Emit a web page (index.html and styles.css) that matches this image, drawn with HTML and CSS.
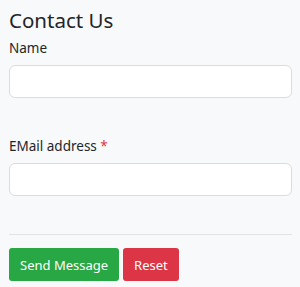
FILE: index.html
```html
<!DOCTYPE html>
<html lang="en">
  <head>
    <meta charset="UTF-8" />
    <title>Contact Us</title>
    <link rel="stylesheet" href="styles.css">
  </head>
  <body>
    <div class="contact">
      <h2>Contact Us</h2>
      <form class="contact-form">
        <div class="field">
          <label for="name">Name</label>
          <input id="name" type="text" />
        </div>
        <div class="field">
          <label for="email">EMail address <span class="req">*</span></label>
          <input id="email" type="email" />
        </div>
        <hr />
        <div class="actions">
          <button type="submit" class="btn send">Send Message</button>
          <button type="reset" class="btn reset">Reset</button>
        </div>
      </form>
    </div>
  </body>
</html>
```

FILE: styles.css
```css
body {
  font-family: "Noto Sans", Arial, sans-serif;
  background: #f8f9fa;
  color: #212529;
  margin: 0;
  padding: 0;
}

.contact {
  padding: 8px 8px 0 9px;
}

h2 {
  font-size: 20.5px;
  font-weight: 400;
  line-height: 25px;
  margin: 0 0 5px;
}

.field {
  display: flex;
  flex-direction: column;
  margin-bottom: 38px;
}

.field label {
  font-size: 13.5px;
  line-height: 20px;
  margin-bottom: 7px;
}

.req {
  color: #dc3545;
}

.field input {
  height: 33px;
  box-sizing: border-box;
  border: 1px solid #dcdcdc;
  border-radius: 6px;
  background: #fff;
  font: inherit;
}

hr {
  border: none;
  border-top: 1px solid #e2e3e5;
  margin: 0 0 13px;
}

.actions {
  display: flex;
  gap: 4px;
}

.btn {
  height: 33px;
  padding: 0 11px;
  border: none;
  border-radius: 3px;
  font-family: inherit;
  font-size: 13px;
  color: #fff;
  cursor: pointer;
}

.send {
  background-color: #28a745;
}

.reset {
  background-color: #dc3545;
}
```
